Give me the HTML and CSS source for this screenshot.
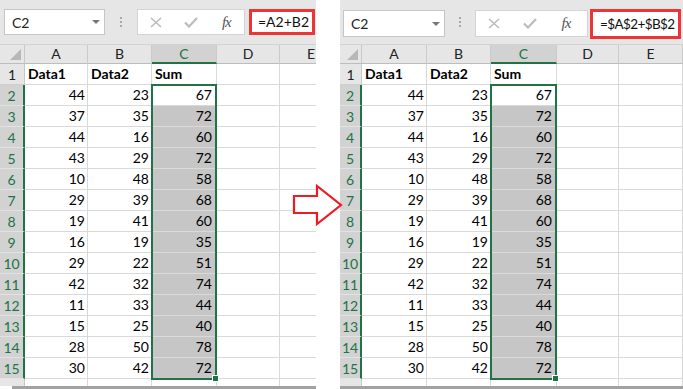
FILE: index.html
```html
<!DOCTYPE html>
<html lang="en">
<head>
  <meta charset="UTF-8">
  <title>Relative vs absolute reference</title>
  <link rel="stylesheet" href="styles.css">
</head>
<body>
<div class="screen">

  <!-- before: relative reference -->
  <div class="panel panel-a">
    <div class="toolbar">
      <div class="namebox">C2<span class="caret"></span></div>
      <div class="grip"><span></span><span></span><span></span></div>
      <div class="ctrl">
        <span class="ico"><svg width="12" height="11" viewBox="0 0 12 11"><path d="M1 1 L11 10 M11 1 L1 10" stroke="#bcbcbc" stroke-width="1.6" fill="none"/></svg></span>
        <span class="ico"><svg width="14" height="11" viewBox="0 0 14 11"><path d="M1 5.5 L5 9.5 L13 1" stroke="#bcbcbc" stroke-width="2.2" fill="none"/></svg></span>
        <span class="ico fx">fx</span>
      </div>
      <div class="formula">=A2+B2</div>
    </div>

    <div class="sheet">
      <div class="corner"><svg width="25" height="19" viewBox="0 0 25 19"><path d="M21 4 L21 15 L10 15 Z" fill="#b7b7b7"/></svg></div>
      <div class="col">A</div><div class="col">B</div><div class="col on">C</div><div class="col">D</div><div class="col">E</div>

      <div class="rh">1</div><div class="c b">Data1</div><div class="c b">Data2</div><div class="c b">Sum</div><div class="c"></div><div class="c"></div>
      <div class="rh on">2</div><div class="c n">44</div><div class="c n">23</div><div class="c n sc">67</div><div class="c"></div><div class="c"></div>
      <div class="rh on">3</div><div class="c n">37</div><div class="c n">35</div><div class="c n sc hl">72</div><div class="c"></div><div class="c"></div>
      <div class="rh on">4</div><div class="c n">44</div><div class="c n">16</div><div class="c n sc hl">60</div><div class="c"></div><div class="c"></div>
      <div class="rh on">5</div><div class="c n">43</div><div class="c n">29</div><div class="c n sc hl">72</div><div class="c"></div><div class="c"></div>
      <div class="rh on">6</div><div class="c n">10</div><div class="c n">48</div><div class="c n sc hl">58</div><div class="c"></div><div class="c"></div>
      <div class="rh on">7</div><div class="c n">29</div><div class="c n">39</div><div class="c n sc hl">68</div><div class="c"></div><div class="c"></div>
      <div class="rh on">8</div><div class="c n">19</div><div class="c n">41</div><div class="c n sc hl">60</div><div class="c"></div><div class="c"></div>
      <div class="rh on">9</div><div class="c n">16</div><div class="c n">19</div><div class="c n sc hl">35</div><div class="c"></div><div class="c"></div>
      <div class="rh on">10</div><div class="c n">29</div><div class="c n">22</div><div class="c n sc hl">51</div><div class="c"></div><div class="c"></div>
      <div class="rh on">11</div><div class="c n">42</div><div class="c n">32</div><div class="c n sc hl">74</div><div class="c"></div><div class="c"></div>
      <div class="rh on">12</div><div class="c n">11</div><div class="c n">33</div><div class="c n sc hl">44</div><div class="c"></div><div class="c"></div>
      <div class="rh on">13</div><div class="c n">15</div><div class="c n">25</div><div class="c n sc hl">40</div><div class="c"></div><div class="c"></div>
      <div class="rh on">14</div><div class="c n">28</div><div class="c n">50</div><div class="c n sc hl">78</div><div class="c"></div><div class="c"></div>
      <div class="rh on">15</div><div class="c n">30</div><div class="c n">42</div><div class="c n sc hl">72</div><div class="c"></div><div class="c"></div>
      <div class="rh blank"></div><div class="c"></div><div class="c"></div><div class="c"></div><div class="c"></div><div class="c"></div>

      <div class="selection"><span class="handle"></span></div>
    </div>
    <div class="bar"></div>
  </div>

  <!-- after: absolute reference -->
  <div class="panel panel-b">
    <div class="toolbar">
      <div class="namebox">C2<span class="caret"></span></div>
      <div class="grip"><span></span><span></span><span></span></div>
      <div class="ctrl">
        <span class="ico"><svg width="12" height="11" viewBox="0 0 12 11"><path d="M1 1 L11 10 M11 1 L1 10" stroke="#bcbcbc" stroke-width="1.6" fill="none"/></svg></span>
        <span class="ico"><svg width="14" height="11" viewBox="0 0 14 11"><path d="M1 5.5 L5 9.5 L13 1" stroke="#bcbcbc" stroke-width="2.2" fill="none"/></svg></span>
        <span class="ico fx">fx</span>
      </div>
      <div class="formula">=$A$2+$B$2</div>
    </div>

    <div class="sheet">
      <div class="corner"><svg width="22" height="19" viewBox="0 0 22 19"><path d="M18 4 L18 15 L7 15 Z" fill="#b7b7b7"/></svg></div>
      <div class="col">A</div><div class="col">B</div><div class="col on">C</div><div class="col">D</div><div class="col">E</div>

      <div class="rh">1</div><div class="c b">Data1</div><div class="c b">Data2</div><div class="c b">Sum</div><div class="c"></div><div class="c"></div>
      <div class="rh on">2</div><div class="c n">44</div><div class="c n">23</div><div class="c n sc">67</div><div class="c"></div><div class="c"></div>
      <div class="rh on">3</div><div class="c n">37</div><div class="c n">35</div><div class="c n sc hl">72</div><div class="c"></div><div class="c"></div>
      <div class="rh on">4</div><div class="c n">44</div><div class="c n">16</div><div class="c n sc hl">60</div><div class="c"></div><div class="c"></div>
      <div class="rh on">5</div><div class="c n">43</div><div class="c n">29</div><div class="c n sc hl">72</div><div class="c"></div><div class="c"></div>
      <div class="rh on">6</div><div class="c n">10</div><div class="c n">48</div><div class="c n sc hl">58</div><div class="c"></div><div class="c"></div>
      <div class="rh on">7</div><div class="c n">29</div><div class="c n">39</div><div class="c n sc hl">68</div><div class="c"></div><div class="c"></div>
      <div class="rh on">8</div><div class="c n">19</div><div class="c n">41</div><div class="c n sc hl">60</div><div class="c"></div><div class="c"></div>
      <div class="rh on">9</div><div class="c n">16</div><div class="c n">19</div><div class="c n sc hl">35</div><div class="c"></div><div class="c"></div>
      <div class="rh on">10</div><div class="c n">29</div><div class="c n">22</div><div class="c n sc hl">51</div><div class="c"></div><div class="c"></div>
      <div class="rh on">11</div><div class="c n">42</div><div class="c n">32</div><div class="c n sc hl">74</div><div class="c"></div><div class="c"></div>
      <div class="rh on">12</div><div class="c n">11</div><div class="c n">33</div><div class="c n sc hl">44</div><div class="c"></div><div class="c"></div>
      <div class="rh on">13</div><div class="c n">15</div><div class="c n">25</div><div class="c n sc hl">40</div><div class="c"></div><div class="c"></div>
      <div class="rh on">14</div><div class="c n">28</div><div class="c n">50</div><div class="c n sc hl">78</div><div class="c"></div><div class="c"></div>
      <div class="rh on">15</div><div class="c n">30</div><div class="c n">42</div><div class="c n sc hl">72</div><div class="c"></div><div class="c"></div>
      <div class="rh blank"></div><div class="c"></div><div class="c"></div><div class="c"></div><div class="c"></div><div class="c"></div>

      <div class="selection"><span class="handle"></span></div>
    </div>
    <div class="bar"></div>
  </div>

  <!-- arrow between the two sheets -->
  <svg class="arrow" width="52" height="42" viewBox="0 0 52 42">
    <path d="M2 12 L25 12 L25 2 L49 21 L25 40 L25 29 L2 29 Z" fill="#fff" stroke="#ec1c24" stroke-width="2.2" stroke-linejoin="miter"/>
  </svg>
</div>
</body>
</html>
```

FILE: styles.css
```css
* {
  box-sizing: border-box;
}

body {
  margin: 0;
  background: #fff;
  font-family: Lato, "Liberation Sans", sans-serif;
  font-size: 14px;
  color: #000;
}

.screen {
  position: relative;
  display: flex;
  width: 683px;
  height: 389px;
  overflow: hidden;
}

/* One Excel window */
.panel {
  flex: none;
  display: flex;
  flex-direction: column;
  height: 389px;
  overflow: hidden;
}

.panel-a {
  width: 316px;
}

.panel-b {
  width: 343px;
  margin-left: 24px;
}

/* Name box + formula bar */
.toolbar {
  flex: none;
  height: 45px;
  display: flex;
  align-items: flex-start;
  padding-top: 9px;
  background: #e6e6e6;
  border-bottom: 1px solid #d2d2d2;
}

.namebox {
  display: flex;
  align-items: center;
  width: 101px;
  height: 26px;
  margin-left: 4px;
  padding: 0 4px 0 7px;
  background: #fff;
  border: 1px solid #c6c6c6;
  color: #222;
}

.caret {
  margin-left: auto;
  width: 0;
  height: 0;
  border-left: 4px solid transparent;
  border-right: 4px solid transparent;
  border-top: 4px solid #777;
}

.grip {
  width: 32px;
  height: 26px;
  display: flex;
  flex-direction: column;
  align-items: center;
  justify-content: center;
  gap: 2px;
}

.grip span {
  width: 2px;
  height: 2px;
  background: #aaa;
}

.ctrl {
  display: flex;
  align-items: center;
  width: 108px;
  height: 26px;
  background: #fff;
  border: 1px solid #d4d4d4;
}

.ico {
  width: 36px;
  display: flex;
  justify-content: center;
  align-items: center;
}

.fx {
  font-family: "Liberation Serif", serif;
  font-style: italic;
  font-size: 15px;
  letter-spacing: -1px;
  color: #555;
}

.formula {
  width: 66px;
  height: 26px;
  margin-left: 4px;
  padding-left: 6px;
  background: #fff;
  border: 3px solid #ee3434;
  line-height: 20px;
  white-space: nowrap;
  color: #111;
}

.panel-b .namebox {
  width: 102px;
  height: 27px;
  margin-left: 3px;
  margin-top: 1px;
}

.panel-b .grip {
  width: 30px;
}

.panel-b .ctrl {
  width: 113px;
  height: 27px;
  margin-top: 1px;
}

.panel-b .formula {
  width: 91px;
  height: 30px;
  margin-left: 2px;
  padding-left: 7px;
  line-height: 24px;
  letter-spacing: -0.6px;
  font-size: 13.5px;
}

/* Grid */
.sheet {
  position: relative;
  flex: none;
  height: 341px;
  display: grid;
  grid-template-rows: 19px;
  grid-auto-rows: 21px;
  align-content: start;
  overflow: hidden;
}

.panel-a .sheet {
  grid-template-columns: 25px 63px 64px 65px 63px 63px;
}

.panel-b .sheet {
  grid-template-columns: 22px 65px 64px 66px 62px 64px;
}

.corner {
  background: #e6e6e6;
  border-right: 1px solid #c8c8c8;
  border-bottom: 1px solid #bdbdbd;
}

.corner svg {
  display: block;
}

.col {
  background: #e6e6e6;
  border-right: 1px solid #cbcbcb;
  border-bottom: 1px solid #bdbdbd;
  text-align: center;
  line-height: 18px;
  color: #222;
}

.col.on {
  background: #d2d2d2;
  color: #217346;
  border-bottom: 2px solid #217346;
}

.rh {
  background: #e6e6e6;
  border-right: 1px solid #c8c8c8;
  border-bottom: 1px solid #cfcfcf;
  text-align: center;
  line-height: 21px;
  color: #222;
}

.rh.on {
  background: #d2d2d2;
  color: #217346;
  border-right: 2px solid #217346;
  border-bottom-color: #e2e2e2;
}

.c {
  border-right: 1px solid #d9d9d9;
  border-bottom: 1px solid #d9d9d9;
  padding: 0 2px 0 3px;
  line-height: 20px;
  white-space: nowrap;
  overflow: hidden;
}

.n {
  text-align: right;
}

.b {
  font-weight: bold;
}

.sc {
  padding-right: 4px;
}

.hl {
  background: #c6c6c6;
  border-bottom-color: #dadada;
}

/* selected range C2:C15 */
.selection {
  position: absolute;
  grid-column: 4 / 5;
  grid-row: 3 / 17;
  top: -1px;
  left: -1px;
  right: 0;
  bottom: -1px;
  border: 2px solid #217346;
}

.handle {
  position: absolute;
  right: -4px;
  bottom: -4px;
  width: 7px;
  height: 7px;
  background: #217346;
  border: 1px solid #fff;
}

.bar {
  flex: none;
  height: 3px;
  background: #a2a2a2;
}

.panel-a .bar {
  margin-left: 12px;
}

.arrow {
  position: absolute;
  left: 292px;
  top: 184px;
}
```
